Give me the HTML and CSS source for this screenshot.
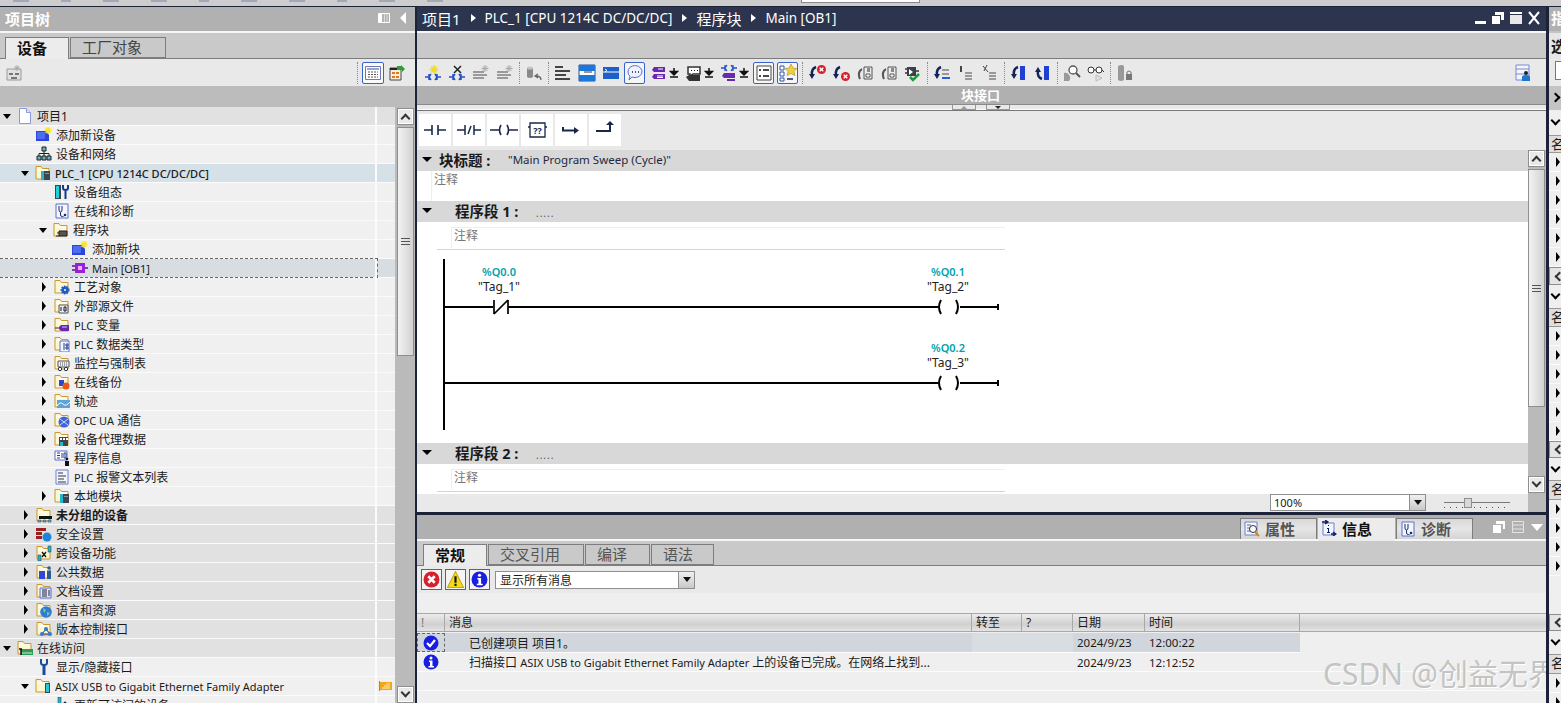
FILE: index.html
```html
<!DOCTYPE html>
<html lang="zh-CN">
<head>
    <meta charset="UTF-8">
    <title>PLC_1 Main [OB1]</title>
    <link rel="stylesheet" href="styles.css">
</head>
<body>
<!-- shared icon parts -->
<svg class="defs" xmlns="http://www.w3.org/2000/svg">
    <symbol id="folder" viewBox="0 0 16 16"><path d="M1 14V1.500h5l1.500 2H14V14z" fill="#fdf6d2" stroke="#c9982e"/><path d="M2 5h11" stroke="#fff"/></symbol>
    <symbol id="addnew" viewBox="0 0 16 16"><path d="M0 4h10v-1l3 5v6H0z" fill="#2d46d8"/><path d="M1 5h8v7H1z" fill="#4f6cf0"/><path d="M12 0v7M8.500 3.500h7M9.500 1l5 5M14.500 1l-5 5" stroke="#f7e42a" stroke-width="1.300"/></symbol>
    <symbol id="module" viewBox="0 0 16 16"><path d="M6 6h9v9H6z" fill="#3c4650"/><path d="M6 6h3v9H6z" fill="#28b4c8"/><path d="M10 8h4v1h-4z" fill="#8a949c"/></symbol>
    <symbol id="diag" viewBox="0 0 16 16"><path d="M2 1h12v14H2z" fill="#f4f6ff" stroke="#5a6ed0"/><path d="M5 3v4q0 2 1.500 2T8 7V3M6.500 9v3q0 1.500 2 1.500h1" fill="none" stroke="#1c2a60"/><circle cx="11" cy="12" r="1.300" fill="#1c2a60"/></symbol>
    <symbol id="net" viewBox="0 0 18 18"><path d="M1 13h4M5 10v6M13 10v6M13 13h4M7 10l-2 3 2 3M11 10l2 3-2 3" fill="none" stroke="#2450c8" stroke-width="1.500"/></symbol>
    <symbol id="star" viewBox="0 0 18 18"><path d="M10 1v9M5.500 5.500h9M7 2.500l6 6M13 2.500l-6 6" stroke="#f3dc20" stroke-width="1.500"/></symbol>
    <symbol id="graylines" viewBox="0 0 18 18"><path d="M1 8h11M1 11h14M1 14h11" stroke="#9a9a9a" stroke-width="2"/></symbol>
    <symbol id="grayburst" viewBox="0 0 18 18"><path d="M13 1v7M9.500 4.500h7M10.500 2l5 5M15.500 2l-5 5" stroke="#a8a8a8"/></symbol>
    <symbol id="cyl" viewBox="0 0 18 18"><path d="M2 4q3-2 6 0v9q-3 2-6 0z" fill="#8a8a8a"/><ellipse cx="5" cy="4" rx="3" ry="1.500" fill="#c4c4c4"/></symbol>
    <symbol id="down" viewBox="0 0 10 18"><path d="M5 4v4M1.500 7.500h7L5 11zM1 13h8" fill="#111" stroke="#111" stroke-width="1.500"/></symbol>
    <symbol id="arc" viewBox="0 0 18 18"><path d="M8 3Q3 5 4 11" fill="none" stroke="#14245a" stroke-width="2.500"/><path d="M1 10h6l-3 5z" fill="#14245a"/></symbol>
    <symbol id="xball" viewBox="0 0 10 10"><circle cx="5" cy="5" r="5" fill="#d8202c"/><path d="M3 3l4 4M7 3l-4 4" stroke="#fff" stroke-width="1.500"/></symbol>
    <symbol id="tinybox" viewBox="0 0 18 18"><path d="M8 3h8v12H8z" fill="#ececec" stroke="#555"/><path d="M10 10h4v3h-4z" fill="#fff" stroke="#333" stroke-width=".8"/><path d="M11 4h3v4h-3z" fill="#888"/></symbol>
    <symbol id="info" viewBox="0 0 16 16"><circle cx="8" cy="8" r="7.500" fill="#1a1ee0"/><circle cx="8" cy="4" r="1.500" fill="#fff"/><path d="M6 6.500h3.500V12H11v1.500H5.500V12H7V8H6z" fill="#fff"/></symbol>
</svg>

<div class="topstrip">
    <i class="blob w16"></i><i class="blob w10"></i><i class="blob w16"></i><i class="blob w16"></i><i class="blob w10"></i><i class="blob w16"></i><i class="blob w16"></i><i class="blob w10"></i><i class="blob w16"></i><i class="blob w16"></i>
    <span class="topbox"></span>
</div>

<div class="app">
    <!-- project tree -->
    <aside class="tree-panel">
        <div class="panel-title">
            <span>项目树</span>
            <div class="title-tools">
                <svg width="12" height="10" viewBox="0 0 12 10"><path d="M.5.500h11v9H.5z" fill="#b2b2b2" stroke="#fff"/><path d="M1 1h3v8H1z" fill="#fff"/><path d="M6.500 1v8M9 1v8" stroke="#ddd"/></svg>
                <i class="tri-left"></i>
            </div>
        </div>
        <div class="white-gap"></div>
        <div class="tab-band tree-tabs">
            <span class="tab active">设备</span>
            <span class="tab">工厂对象</span>
        </div>
        <div class="tree-tools">
            <svg class="tool-left" width="16" height="16" viewBox="0 0 16 16"><path d="M1 4h14v11H1z" fill="#e0e0e0" stroke="#9a9a9a"/><path d="M3 8h4v2H3zM9 8h4v2H9zM5 12h6v2H5z" fill="#777"/><path d="M11 0v6M8 3h6M9 1l4 4M13 1l-4 4" stroke="#aaa"/></svg>
            <span class="sep"></span>
            <span class="on-btn"><svg width="16" height="14" viewBox="0 0 16 14"><path d="M.5.500h15v13H.5z" fill="#fff" stroke="#6a7ab8"/><path d="M2 2h12v2H2z" fill="#9aa4cc"/><path d="M3 6h10M3 8.500h10M3 11h10" stroke="#555" stroke-dasharray="2 1"/></svg></span>
            <svg class="tool-next" width="16" height="16" viewBox="0 0 16 16"><path d="M1 3h11v12H1z" fill="#f4f0e0" stroke="#444"/><path d="M1 3h11v2H1z" fill="#222"/><path d="M3 7h3v2H3zM7 7h3v2H7zM3 11h3v2H3zM7 11h3v2H7z" fill="#e07820"/><path d="M8 1h4V0l4 4-3 3v-2H8z" fill="#2c9c3c"/></svg>
        </div>
        <div class="tree-head"></div>
        <div class="tree-body">
            <div class="tree-rows">
                <div class="row dark lv0"><i class="arr-d"></i><svg class="ic" viewBox="0 0 16 16"><path d="M2.500.500h7l4 4v11h-11z" fill="#fff" stroke="#8a9ae0"/><path d="M9.500.500v4h4" fill="#dfe4fa" stroke="#8a9ae0"/></svg><span>项目1</span></div>
                <div class="row lv1"><i class="arr-none"></i><svg class="ic" viewBox="0 0 16 16"><use href="#addnew"/></svg><span>添加新设备</span></div>
                <div class="row lv1"><i class="arr-none"></i><svg class="ic" viewBox="0 0 16 16"><path d="M6 1h4v4H6zM1 10h4v4H1zM6 10h4v4H6zM11 10h4v4h-4z" fill="#6ab0c0" stroke="#222"/><path d="M8 5v5M3 10V7.500h10V10" fill="none" stroke="#222"/></svg><span>设备和网络</span></div>
                <div class="row current lv1"><i class="arr-d"></i><svg class="ic" viewBox="0 0 16 16"><use href="#folder"/><use href="#module"/></svg><span class="latin heavy">PLC_1 [CPU 1214C DC/DC/DC]</span></div>
                <div class="row lv2"><i class="arr-none"></i><svg class="ic" viewBox="0 0 16 16"><path d="M1 1h6v14H1z" fill="#3c4650"/><path d="M2 2h3v12H2z" fill="#20d0d8"/><path d="M9 1v3q0 2 2.500 2T14 4V1M11.500 6v9" fill="none" stroke="#123c8c" stroke-width="2"/></svg><span>设备组态</span></div>
                <div class="row lv2"><i class="arr-none"></i><svg class="ic" viewBox="0 0 16 16"><use href="#diag"/></svg><span>在线和诊断</span></div>
                <div class="row lv2"><i class="arr-d"></i><svg class="ic" viewBox="0 0 16 16"><use href="#folder"/><path d="M4 11h2M6 9h8v5H6zM3 14h3" fill="#555" stroke="#222"/></svg><span>程序块</span></div>
                <div class="row lv3"><i class="arr-none"></i><svg class="ic" viewBox="0 0 16 16"><use href="#addnew"/></svg><span>添加新块</span></div>
                <div class="row selected lv3"><i class="arr-none"></i><svg class="ic" viewBox="0 0 16 16"><path d="M0 6h3M0 10h3M13 8h3" stroke="#5a1090" stroke-width="1.500"/><path d="M3 3h10v10H3z" fill="#9a20d8"/><path d="M6 6h4v4H6z" fill="#e8b0ff"/></svg><span class="latin">Main [OB1]</span></div>
                <div class="row lv2"><i class="arr-r"></i><svg class="ic" viewBox="0 0 16 16"><use href="#folder"/><circle cx="11" cy="11" r="3.500" fill="#1e5ac8" stroke="#1e5ac8" stroke-dasharray="1.500 1" stroke-width="2"/><circle cx="11" cy="11" r="1" fill="#fff"/></svg><span>工艺对象</span></div>
                <div class="row lv2"><i class="arr-r"></i><svg class="ic" viewBox="0 0 16 16"><use href="#folder"/><path d="M5 7h9v8H5z" fill="#eef0f8" stroke="#555"/><path d="M7 9v4M10 9h2v4h-2z" fill="none" stroke="#112"/></svg><span>外部源文件</span></div>
                <div class="row lv2"><i class="arr-r"></i><svg class="ic" viewBox="0 0 16 16"><use href="#folder"/><path d="M4 11l3-3h8v6H7z" fill="#6a28b0"/><path d="M1 11h3" stroke="#222"/><path d="M8 10h5" stroke="#d8c0f0"/></svg><span><b class="latin">PLC</b> 变量</span></div>
                <div class="row lv2"><i class="arr-r"></i><svg class="ic" viewBox="0 0 16 16"><use href="#folder"/><path d="M6 5h9v11H6z" fill="#f4f6ff" stroke="#5a6ed0"/><path d="M10 7v7M12 8h2v2h-2zM12 11h2v2h-2z" fill="none" stroke="#233a8c"/></svg><span><b class="latin">PLC</b> 数据类型</span></div>
                <div class="row lv2"><i class="arr-r"></i><svg class="ic" viewBox="0 0 16 16"><use href="#folder"/><path d="M4 6h11v6H4z" fill="#eef0f8" stroke="#555"/><path d="M6 8h7M6 10h7" stroke="#555" stroke-dasharray="1 1"/><circle cx="6" cy="14" r="1.700" fill="#fff" stroke="#234"/><circle cx="12" cy="14" r="1.700" fill="#fff" stroke="#234"/></svg><span>监控与强制表</span></div>
                <div class="row lv2"><i class="arr-r"></i><svg class="ic" viewBox="0 0 16 16"><use href="#folder"/><path d="M5 6h5v6H5z" fill="#2a48d8"/><circle cx="12" cy="12" r="3.500" fill="#e85818"/></svg><span>在线备份</span></div>
                <div class="row lv2"><i class="arr-r"></i><svg class="ic" viewBox="0 0 16 16"><use href="#folder"/><path d="M3 7h13v8H3z" fill="#5ea4d8"/><path d="M3 13q3-5 6-2t7-2" fill="none" stroke="#fff"/></svg><span>轨迹</span></div>
                <div class="row lv2"><i class="arr-r"></i><svg class="ic" viewBox="0 0 16 16"><use href="#folder"/><circle cx="10" cy="10" r="5.500" fill="#3d64d8"/><path d="M6 7l8 6M6 13l8-6" stroke="#cdd8fa"/></svg><span><b class="latin">OPC UA</b> 通信</span></div>
                <div class="row lv2"><i class="arr-r"></i><svg class="ic" viewBox="0 0 16 16"><use href="#folder"/><path d="M5 6h9v9H5z" fill="#3c4650"/><path d="M6 7h2v2H6zM9 7h2v2H9zM12 7h2v2h-2z" fill="#fff"/><path d="M6 11h3v4H6z" fill="#28b4c8"/></svg><span>设备代理数据</span></div>
                <div class="row lv2"><i class="arr-none"></i><svg class="ic" viewBox="0 0 16 16"><path d="M1 1h12v9H1z" fill="#fff" stroke="#5a6ed0"/><path d="M3 3h3M3 5.500h3M3 8h3M8 3v5M10 3h2v5h-2z" fill="none" stroke="#233a8c"/><path d="M11 11h4v5h-4z" fill="#111"/><circle cx="13" cy="9" r="1.300" fill="#111"/></svg><span>程序信息</span></div>
                <div class="row lv2"><i class="arr-none"></i><svg class="ic" viewBox="0 0 16 16"><path d="M2 1h12v14H2z" fill="#f4f6ff" stroke="#6a7ed8"/><path d="M4 4h5M4 7h8M4 10h6M4 13h8" stroke="#333"/></svg><span><b class="latin">PLC</b> 报警文本列表</span></div>
                <div class="row lv2"><i class="arr-r"></i><svg class="ic" viewBox="0 0 16 16"><use href="#folder"/><use href="#module"/></svg><span>本地模块</span></div>
                <div class="row dark lv1"><i class="arr-r"></i><svg class="ic" viewBox="0 0 16 16"><use href="#folder"/><path d="M3 9h13v3H3z" fill="#111"/><path d="M2 13h3v2H2zM7 13h3v2H7zM12 13h3v2h-3z" fill="#5ac0d0" stroke="#234" stroke-width=".5"/></svg><span class="strong">未分组的设备</span></div>
                <div class="row dark lv1"><i class="arr-r"></i><svg class="ic" viewBox="0 0 16 16"><path d="M0 2h10v3H0zM0 6h6v3H0zM0 10h6v3H0z" fill="#9c2020"/><circle cx="11" cy="11" r="4.500" fill="#1e84d8"/></svg><span>安全设置</span></div>
                <div class="row dark lv1"><i class="arr-r"></i><svg class="ic" viewBox="0 0 16 16"><use href="#folder"/><path d="M12 1h3v6h-3zM2 10h3v6H2z" fill="#28b4c8" stroke="#234" stroke-width=".5"/><path d="M6 7l4 5M10 7l-4 5" stroke="#111" stroke-width="1.300"/></svg><span>跨设备功能</span></div>
                <div class="row dark lv1"><i class="arr-r"></i><svg class="ic" viewBox="0 0 16 16"><use href="#folder"/><path d="M3 7h6v8H3z" fill="#3048d8"/><circle cx="13" cy="4" r="1.800" fill="#2c5c94"/><path d="M11 6.500h4V15h-4z" fill="#2c5c94"/></svg><span>公共数据</span></div>
                <div class="row dark lv1"><i class="arr-r"></i><svg class="ic" viewBox="0 0 16 16"><use href="#folder"/><path d="M4 5h11v10H4z" fill="#e4e8fa" stroke="#5a6ed0"/><path d="M6 7h5M6 9h5M6 11h5M6 13h5M13 7v6" stroke="#223"/></svg><span>文档设置</span></div>
                <div class="row dark lv1"><i class="arr-r"></i><svg class="ic" viewBox="0 0 16 16"><use href="#folder"/><circle cx="10" cy="10" r="5.800" fill="#2c7cd8"/><path d="M7 6l3 2-2 3zM11 10l3 1-3 3z" fill="#80d070"/></svg><span>语言和资源</span></div>
                <div class="row dark lv1"><i class="arr-r"></i><svg class="ic" viewBox="0 0 16 16"><use href="#folder"/><path d="M10 8l-4 5h8z" fill="none" stroke="#234"/><circle cx="10" cy="8" r="2" fill="#2c7cd8"/><circle cx="6" cy="13" r="2" fill="#2c7cd8"/><circle cx="14" cy="13" r="2" fill="#2c7cd8"/></svg><span>版本控制接口</span></div>
                <div class="row dark lv0"><i class="arr-d"></i><svg class="ic" viewBox="0 0 16 16"><use href="#folder"/><path d="M4 9h12v6H4z" fill="#2f9a58"/><path d="M4 9v6M2 9h3" stroke="#111" stroke-width="1.500"/><path d="M6 14v-2M8 14v-2M10 14v-2M12 14v-2M14 14v-2" stroke="#cfe8d0"/></svg><span>在线访问</span></div>
                <div class="row lv1"><i class="arr-none"></i><svg class="ic" viewBox="0 0 16 16"><path d="M5 0v4q0 2 3 2t3-2V0" fill="none" stroke="#1c4c98" stroke-width="2"/><path d="M8 6v10" stroke="#1c4c98" stroke-width="3"/></svg><span>显示/隐藏接口</span></div>
                <div class="row lv1"><i class="arr-d"></i><svg class="ic" viewBox="0 0 16 16"><use href="#folder"/><path d="M10 5h5v10h-5z" fill="#3c4650"/><path d="M11 6h3v8h-3z" fill="#28c8d8"/></svg><span class="latin">ASIX USB to Gigabit Ethernet Family Adapter</span>
                    <svg class="flag" width="14" height="10" viewBox="0 0 14 10"><path d="M1 1h12v8H1z" fill="#f0a818"/><path d="M0 0v10" stroke="#222"/><path d="M3 7h8M5 5h6M7 3h4" stroke="#fff2c0"/></svg></div>
                <div class="row lv2"><i class="arr-none"></i><svg class="ic" viewBox="0 0 16 16"><path d="M4 0h3v8H4z" fill="#28b4c8" stroke="#234" stroke-width=".5"/><circle cx="11" cy="6" r="1.500" fill="#223"/></svg><span>更新可访问的设备</span></div>
            </div>
            <div class="vscroll tree-scroll">
                <span class="sb-btn"><i class="chev-up"></i></span>
                <span class="sb-thumb"><i class="grip"></i></span>
                <span class="sb-fill"></span>
                <span class="sb-btn"><i class="chev-down"></i></span>
            </div>
        </div>
    </aside>

    <main class="main">
        <div class="editor-title">
            <span class="crumb cjk">项目1</span><i class="crumb-arr"></i>
            <span class="crumb">PLC_1 [CPU 1214C DC/DC/DC]</span><i class="crumb-arr"></i>
            <span class="crumb cjk">程序块</span><i class="crumb-arr"></i>
            <span class="crumb">Main [OB1]</span>
            <div class="win-btns">
                <svg width="11" height="14" viewBox="0 0 11 14"><path d="M0 10h11v3H0z" fill="#fff"/></svg>
                <svg width="12" height="14" viewBox="0 0 12 14"><path d="M3 1h9v8H9V4H3zM0 5h8v8H0z" fill="#fff"/></svg>
                <svg width="12" height="14" viewBox="0 0 12 14"><path d="M0 1h12v2H0z" fill="#fff"/><path d="M0 4h12v9H0z" fill="#e8e8e8"/></svg>
                <svg width="12" height="14" viewBox="0 0 12 14"><path d="M1 1l10 12M11 1L1 13" stroke="#fff" stroke-width="2"/></svg>
            </div>
        </div>
        <div class="white-gap"></div>
        <div class="tab-band"></div>

        <div class="toolbar">
            <span class="tb"><svg viewBox="0 0 18 18"><use href="#net"/><use href="#star"/></svg></span>
            <span class="tb"><svg viewBox="0 0 18 18"><use href="#net"/><path d="M6 2l7 7M13 2L6 9" stroke="#222" stroke-width="1.500"/></svg></span>
            <span class="tb"><svg viewBox="0 0 18 18"><use href="#graylines"/><use href="#grayburst"/></svg></span>
            <span class="tb"><svg viewBox="0 0 18 18"><use href="#graylines"/><use href="#grayburst"/></svg></span>
            <span class="tb-sep"></span>
            <span class="tb"><svg viewBox="0 0 18 18"><use href="#cyl"/><path d="M16 16q0-4-5-4m2-2l-3 2 3 2" fill="none" stroke="#666" stroke-width="1.300"/></svg></span>
            <span class="tb-sep"></span>
            <span class="tb"><svg viewBox="0 0 18 18"><path d="M1 3h8M1 7h15M1 11h11M1 15h15" stroke="#444" stroke-width="2"/></svg></span>
            <span class="tb"><svg viewBox="0 0 18 18"><path d="M1 1h16v16H1z" fill="#fff" stroke="#2050a0"/><path d="M1 1h16v6H1zM1 11h16v6H1z" fill="#1c78d8"/><path d="M6 8h8" stroke="#333"/></svg></span>
            <span class="tb"><svg viewBox="0 0 18 18"><path d="M1 3h16v12H1z" fill="#1c60c8"/><path d="M1 8h16" stroke="#fff"/><path d="M3 5l2 1.500L3 8" fill="none" stroke="#fff"/></svg></span>
            <span class="tb on"><svg viewBox="0 0 18 18"><path d="M2 8a7 6 0 1 1 4 5l-3 3 1-4q-2-1-2-4z" fill="#eef2ff" stroke="#5a70c8"/><path d="M6 8h1M9 8h1M12 8h1" stroke="#223" stroke-width="1.500"/></svg></span>
            <span class="tb wide"><svg viewBox="0 0 18 18"><path d="M2 6l2-3h11v5H4zM2 13l2-3h11v5H4z" fill="#6a28b0"/><path d="M8 5h5M7 12h6M7 13.500h6" stroke="#fff"/></svg><svg class="dn" viewBox="0 0 10 18"><use href="#down"/></svg></span>
            <span class="tb wide"><svg viewBox="0 0 18 18"><path d="M3 3h12v7H8l-3 2v-2H3z" fill="#fff" stroke="#333" stroke-width="1.500"/><path d="M6 6.500h1M9 6.500h1M12 6.500h1" stroke="#111"/><path d="M1 13l3-2h11v6H4z" fill="#333"/></svg><svg class="dn" viewBox="0 0 10 18"><use href="#down"/></svg></span>
            <span class="tb wide"><svg viewBox="0 0 18 18"><path d="M1 4h4M5 1v6M13 1v6M13 4h4M7 1L5 4l2 3M11 1l2 3-2 3" fill="none" stroke="#2450c8" stroke-width="1.300"/><path d="M2 12l2-3h11v5H4z" fill="#6a28b0"/><path d="M7 16h8" stroke="#6a28b0" stroke-width="2"/></svg><svg class="dn" viewBox="0 0 10 18"><use href="#down"/></svg></span>
            <span class="tb on"><svg viewBox="0 0 18 18"><path d="M2 2h14v14H2z" fill="#fff" stroke="#444"/><path d="M4 6h2M8 6h6M4 12h2M8 12h6" stroke="#111" stroke-width="1.500"/></svg></span>
            <span class="tb on"><svg viewBox="0 0 18 18"><path d="M1 2h4v4H1zM1 8h4v4H1zM1 14h4v3H1z" fill="#fff" stroke="#3050b0"/><path d="M12 0l2 4 4 .500-3 3 1 4-4-2-4 2 1-4-3-3 4-.500z" fill="#f0d040" stroke="#a88820" stroke-width=".6"/><path d="M8 15h6" stroke="#14245a" stroke-width="1.500"/></svg></span>
            <span class="tb-sep"></span>
            <span class="tb"><svg viewBox="0 0 18 18"><use href="#arc"/><use href="#xball" x="9" y="1" width="9" height="9"/></svg></span>
            <span class="tb"><svg viewBox="0 0 18 18"><use href="#arc"/><use href="#xball" x="9" y="8" width="9" height="9"/></svg></span>
            <span class="tb"><svg viewBox="0 0 18 18"><use href="#tinybox"/><path d="M6 5Q1 8 4 15" fill="none" stroke="#555" stroke-width="2"/></svg></span>
            <span class="tb"><svg viewBox="0 0 18 18"><use href="#tinybox"/><path d="M6 5Q1 8 4 15" fill="none" stroke="#555" stroke-width="2"/></svg></span>
            <span class="tb"><svg viewBox="0 0 18 18"><path d="M3 3h9v9H3z" fill="#3a4048"/><path d="M5 5l4 3-4 3z" fill="#fff"/><path d="M1 5h2M1 9h2M12 7h3" stroke="#333" stroke-width="1.500"/><path d="M6 13l3 3 6-6" fill="none" stroke="#1c9c3c" stroke-width="2.500"/></svg></span>
            <span class="tb-sep"></span>
            <span class="tb"><svg viewBox="0 0 18 18"><use href="#arc"/><path d="M9 6h7M9 10h7" stroke="#999" stroke-width="2"/><path d="M9 14h8" stroke="#2c5cd8" stroke-width="2"/></svg></span>
            <span class="tb"><svg viewBox="0 0 18 18"><path d="M4 2v6" stroke="#444" stroke-width="2"/><path d="M8 9h7M8 12h7M8 15h7" stroke="#999" stroke-width="2"/></svg></span>
            <span class="tb"><svg viewBox="0 0 18 18"><path d="M2 2l5 6M6 1L3 7" stroke="#444"/><path d="M8 9h7M8 12h7M8 15h7" stroke="#999" stroke-width="2"/></svg></span>
            <span class="tb-sep"></span>
            <span class="tb"><svg viewBox="0 0 18 18"><use href="#arc"/><path d="M10 2h5v14h-5z" fill="#2040d0"/></svg></span>
            <span class="tb"><svg viewBox="0 0 18 18"><g transform="matrix(1 0 0 -1 0 18)"><use href="#arc"/></g><path d="M10 2h5v14h-5z" fill="#2040d0"/></svg></span>
            <span class="tb-sep"></span>
            <span class="tb"><svg viewBox="0 0 18 18"><path d="M1 9a5 5 0 0 1 5 8H1z" fill="#999"/><circle cx="10" cy="6" r="4" fill="#fff" stroke="#555" stroke-width="1.300"/><path d="M13 9l4 4" stroke="#555" stroke-width="2"/></svg></span>
            <span class="tb"><svg viewBox="0 0 18 18"><circle cx="4" cy="6" r="3" fill="#fff" stroke="#333"/><circle cx="12" cy="6" r="3" fill="#fff" stroke="#333"/><path d="M7 6h2M15 6l2 2" stroke="#333"/><path d="M9 11l6 3-6 3z" fill="#e4e4e4" stroke="#bbb"/></svg></span>
            <span class="tb-sep"></span>
            <span class="tb"><svg viewBox="0 0 18 18"><path d="M2 2q4-2 6 0v14q-3 2-6 0z" fill="#999"/><path d="M10 10h6v6h-6z" fill="#777"/><path d="M11 10V8q2-2 4 0v2" fill="none" stroke="#777"/></svg></span>
            <svg class="tb-user" viewBox="0 0 16 18"><path d="M1 1h13v15H1z" fill="#f4f6ff" stroke="#7a88d0"/><path d="M1 5h13M1 10h13" stroke="#7a88d0"/><circle cx="11" cy="9" r="2" fill="#223"/><path d="M7 17v-4q0-2 4-2t4 2v4z" fill="#1c78c8"/></svg>
        </div>

        <div class="iface-bar">块接口</div>
        <div class="grips">
            <span class="grip-a"><i class="up"></i></span>
            <span class="grip-b"><i class="dn"></i></span>
        </div>

        <div class="instr">
            <span class="instr-btn"><svg viewBox="0 0 32 32"><path d="M5 16h8M13 11v10M19 11v10M19 16h8" fill="none" stroke="#18284a" stroke-width="1.600"/></svg></span>
            <span class="instr-btn"><svg viewBox="0 0 32 32"><path d="M4 16h8M12 11v10M21 11v10M21 16h7M15 20l3-8" fill="none" stroke="#18284a" stroke-width="1.500"/></svg></span>
            <span class="instr-btn"><svg viewBox="0 0 32 32"><path d="M3 16h9M22 16h9M14 11q-3 5 0 10M20 11q3 5 0 10" fill="none" stroke="#18284a" stroke-width="1.600"/></svg></span>
            <span class="instr-btn"><svg viewBox="0 0 32 32"><path d="M9 9h15v14H9zM7 13h2M24 13h2" fill="none" stroke="#18284a" stroke-width="1.300"/><text x="16.500" y="20" text-anchor="middle" class="qq">??</text></svg></span>
            <span class="instr-btn"><svg viewBox="0 0 32 32"><path d="M8 13v3.500h11" fill="none" stroke="#18284a" stroke-width="2"/><path d="M19 13l5 3.500-5 3.500z" fill="#18284a"/></svg></span>
            <span class="instr-btn"><svg viewBox="0 0 32 32"><path d="M7 17h14v-6" fill="none" stroke="#18284a" stroke-width="2"/><path d="M17 11l4-4 4 4z" fill="#18284a"/></svg></span>
        </div>

        <div class="editor">
            <div class="code">
                <div class="blocks">
                    <div class="net-head"><i class="arr-d"></i><b class="block-lbl">块标题 :</b><span class="block-val">"Main Program Sweep (Cycle)"</span></div>
                    <div class="block-comment"><span>注释</span></div>

                    <div class="net-head"><i class="arr-d"></i><b class="net-lbl">程序段 1 :</b><span class="dots">.....</span></div>
                    <div class="net-comment"><span>注释</span></div>
                    <svg class="ladder" width="600" height="193" viewBox="0 0 600 193">
                        <path d="M27 9v171" stroke="#000" stroke-width="2"/>
                        <path d="M27 57h49M91 57h430M543 57h38M27 133h494M543 133h38" stroke="#000" stroke-width="2"/>
                        <path d="M77 50v14M91 50v14M77 64l14-14" fill="none" stroke="#000" stroke-width="1.700"/>
                        <path d="M524 50q-4 7 0 14M539 50q4 7 0 14M524 126q-4 7 0 14M539 126q4 7 0 14" fill="none" stroke="#000" stroke-width="2"/>
                        <path d="M581 54v6M581 130v6" stroke="#000" stroke-width="2"/>
                        <text class="addr" x="82" y="26" text-anchor="middle">%Q0.0</text>
                        <text class="tag" x="82" y="41" text-anchor="middle">"Tag_1"</text>
                        <text class="addr" x="531" y="26" text-anchor="middle">%Q0.1</text>
                        <text class="tag" x="531" y="41" text-anchor="middle">"Tag_2"</text>
                        <text class="addr" x="531" y="102" text-anchor="middle">%Q0.2</text>
                        <text class="tag" x="531" y="117" text-anchor="middle">"Tag_3"</text>
                    </svg>

                    <div class="net-head"><i class="arr-d"></i><b class="net-lbl">程序段 2 :</b><span class="dots">.....</span></div>
                    <div class="net-comment"><span>注释</span></div>
                </div>
                <div class="code-foot">
                    <div class="zoom-box"><span>100%</span><i class="combo-btn"><i class="tri-down"></i></i></div>
                    <div class="zoom-slider"><i class="knob"></i></div>
                </div>
            </div>
            <div class="vscroll code-scroll">
                <span class="sb-btn"><i class="chev-up"></i></span>
                <span class="sb-thumb"><i class="grip"></i></span>
                <span class="sb-fill"></span>
                <span class="sb-btn"><i class="chev-down"></i></span>
                <span class="sb-end"></span>
            </div>
        </div>

        <div class="inspector">
            <div class="insp-tabs">
                <span class="insp-tab"><svg viewBox="0 0 16 16"><path d="M1 1h12v13H1z" fill="#f4f6ff" stroke="#6a7ed8"/><path d="M3 4h4M3 7h3M3 10h3" stroke="#667"/><circle cx="9" cy="8" r="3.500" fill="#fff" stroke="#333"/><path d="M11 11l4 4" stroke="#c88820" stroke-width="2"/></svg>属性</span>
                <span class="insp-tab active"><svg viewBox="0 0 16 16"><path d="M2 3h11v12H2z" fill="#f4f6ff" stroke="#6a7ed8"/><path d="M1 2h5M4 0l3 2-3 2M10 14h5M12 12l3 2-3 2" fill="none" stroke="#101c60" stroke-width="1.300"/><path d="M7 5h1v1H7zM6 8h2v4h1v1H6v-1h1V9H6z" fill="#101c60"/></svg>信息</span>
                <span class="insp-tab"><svg viewBox="0 0 16 16"><use href="#diag"/></svg>诊断</span>
                <div class="insp-tools">
                    <svg width="12" height="12" viewBox="0 0 12 12"><path d="M3 0h9v8h-2V3H3zM0 4h8v8H0z" fill="#fff"/></svg>
                    <svg width="12" height="12" viewBox="0 0 12 12"><path d="M.5.500h11v11H.5zM1 4h10M1 8h10" fill="none" stroke="#e4e4e4"/></svg>
                    <i class="tri-white"></i>
                </div>
            </div>
            <div class="white-gap"></div>
            <div class="tab-band msg-tabs">
                <span class="tab active">常规</span>
                <span class="tab">交叉引用</span>
                <span class="tab">编译</span>
                <span class="tab">语法</span>
            </div>
            <div class="filters">
                <span class="flt"><svg viewBox="0 0 16 16"><circle cx="8" cy="8" r="7.500" fill="#d8202c"/><path d="M5 5l6 6M11 5l-6 6" stroke="#fff" stroke-width="2.500"/></svg></span>
                <span class="flt"><svg viewBox="0 0 16 16"><path d="M8 .500l7.500 15H.5z" fill="#f4dc14" stroke="#c8a810"/><path d="M7 5h2v6H7zM7 12h2v2H7z" fill="#111"/></svg></span>
                <span class="flt"><svg viewBox="0 0 16 16"><use href="#info"/></svg></span>
                <div class="combo"><span>显示所有消息</span><i class="combo-btn"><i class="tri-down"></i></i></div>
            </div>
            <div class="msg-space"></div>
            <div class="msg-head">
                <span class="col c-flag pale-text">!</span>
                <span class="col c-msg">消息</span>
                <span class="col c-goto">转至</span>
                <span class="col c-q">?</span>
                <span class="col c-date">日期</span>
                <span class="col c-time">时间</span>
                <span class="col c-rest"></span>
            </div>
            <div class="msg-row first">
                <span class="cell c-flag focus"><svg viewBox="0 0 16 16"><circle cx="8" cy="8" r="7.500" fill="#1a1ee0"/><path d="M4 8l3 3 5-6" fill="none" stroke="#fff" stroke-width="2.200"/></svg></span>
                <span class="cell c-msg text">已创建项目 项目1。</span>
                <span class="cell c-goto pale"></span>
                <span class="cell c-q pale"></span>
                <span class="cell c-date">2024/9/23</span>
                <span class="cell c-time">12:00:22</span>
            </div>
            <div class="msg-row">
                <span class="cell c-flag"><svg viewBox="0 0 16 16"><use href="#info"/></svg></span>
                <span class="cell c-msg text"><span>扫描接口 <b class="latin">ASIX USB to Gigabit Ethernet Family Adapter</b> 上的设备已完成。在网络上找到...</span></span>
                <span class="cell c-goto"></span>
                <span class="cell c-q"></span>
                <span class="cell c-date">2024/9/23</span>
                <span class="cell c-time">12:12:52</span>
            </div>
            <div class="msg-row"></div>
            <div class="watermark">CSDN @创益无界</div>
        </div>
    </main>

    <!-- task cards, cut off by the window edge -->
    <aside class="cards">
        <div class="card-title">指令</div>
        <div class="card-gap"></div>
        <div class="card-opt">选项</div>
        <div class="card-input"><i></i></div>
        <div class="card-grey"><i class="chev-right"></i></div>
        <div class="card-gap"></div>
        <div class="card-chev h25"><i class="chev-down"></i></div>
        <div class="card-name h18">名称</div>
        <div class="card-row"><i class="arr-r"></i></div><div class="card-row"><i class="arr-r"></i></div><div class="card-row"><i class="arr-r"></i></div><div class="card-row"><i class="arr-r"></i></div><div class="card-row"><i class="arr-r"></i></div><div class="card-row"><i class="arr-r"></i></div>
        <div class="card-back h18"><i class="chev-left"></i></div>
        <div class="card-chev h23"><i class="chev-down"></i></div>
        <div class="card-name h19">名称</div>
        <div class="card-row"><i class="arr-r"></i></div><div class="card-row"><i class="arr-r"></i></div><div class="card-row"><i class="arr-r"></i></div><div class="card-row"><i class="arr-r"></i></div><div class="card-row"><i class="arr-r"></i></div><div class="card-row"><i class="arr-r"></i></div>
        <div class="card-back h17"><i class="chev-left"></i></div>
        <div class="card-chev h22"><i class="chev-down"></i></div>
        <div class="card-name h20">名称</div>
        <div class="card-row"><i class="arr-r"></i></div><div class="card-row"><i class="arr-r"></i></div><div class="card-row"><i class="arr-r"></i></div><div class="card-row"><i class="arr-r"></i></div>
        <div class="card-blank"></div>
        <div class="card-back h17"><i class="chev-left"></i></div>
        <div class="card-chev h23"><i class="chev-down"></i></div>
        <div class="card-name h20">名称</div>
        <div class="card-row"><i class="arr-r"></i></div><div class="card-row"><i class="arr-r"></i></div>
    </aside>
</div>
</body>
</html>
```

FILE: styles.css
```css
* {
    box-sizing: border-box;
}
html, body {
    margin: 0;
    height: 703px;
    overflow: hidden;
}
body {
    font-family: "Noto Sans", "Noto Sans CJK SC", sans-serif;
    font-size: 12px;
    color: #1a1a1a;
    background-color: #efefef;
}
i {
    display: block;
    flex: none;
}
svg {
    display: block;
    flex: none;
}
.defs {
    display: none;
}

/* top strip */
.topstrip {
    height: 7px;
    display: flex;
    gap: 32px;
    padding-left: 13px;
    background-color: #cdcdcd;
    border-bottom: 1px solid #1c2338;
}
.blob {
    height: 2px;
    background-color: #a4a8ba;
}
.w16 {
    width: 16px;
}
.w10 {
    width: 10px;
}
.topbox {
    width: 119px;
    height: 3px;
    margin-left: 326px;
    background-color: #fff;
    border: 1px solid #888;
    border-top: none;
}

.app {
    display: flex;
    height: 696px;
}
.white-gap {
    height: 2px;
    background-color: #f6f6f6;
}
.tab-band {
    height: 26px;
    background-color: #c9c9c9;
    border-bottom: 1px solid #7d7d7d;
}
.tab {
    display: flex;
    align-items: center;
    padding: 0 0 1px 11px;
    font-size: 15px;
    line-height: 20px;
    color: #444;
    background-color: #c9c9c9;
    border: 1px solid #7d7d7d;
}
.tab.active {
    font-weight: bold;
    color: #111;
    background-color: #ececec;
    border-bottom: none;
}

/* left panel */
.tree-panel {
    width: 415px;
    flex: none;
    display: flex;
    flex-direction: column;
}
.panel-title {
    height: 24px;
    display: flex;
    align-items: center;
    justify-content: space-between;
    padding: 0 0 2px 5px;
    font-size: 15px;
    font-weight: bold;
    color: #fff;
    background-color: #b1b1b1;
}
.title-tools {
    display: flex;
    align-items: center;
    gap: 10px;
    padding-right: 9px;
}
.tri-left {
    border: 6px solid transparent;
    border-left: none;
    border-right: 6px solid #fff;
}
.tree-tabs {
    display: flex;
    align-items: flex-end;
    gap: 1px;
    padding-left: 5px;
}
.tree-tabs .tab {
    height: 22px;
    margin-bottom: -1px;
    width: 64px;
}
.tree-tabs .tab + .tab {
    width: 96px;
    margin-bottom: 0;
    height: 21px;
}
.tree-tools {
    height: 27px;
    display: flex;
    align-items: center;
    padding-left: 6px;
    background-color: #e9e9e9;
}
.tool-left {
    margin-right: 335px;
}
.sep {
    width: 1px;
    height: 22px;
    margin-right: 4px;
    border-left: 1px dotted #888;
}
.on-btn {
    width: 22px;
    height: 22px;
    display: flex;
    align-items: center;
    justify-content: center;
    background-color: #fafafa;
    border: 1px solid #3a62c8;
    border-radius: 2px;
}
.tool-next {
    margin-left: 5px;
}
.tree-head {
    height: 21px;
    background-color: #bcbcbc;
}
.tree-body {
    display: flex;
    flex: 1;
    overflow: hidden;
}
.tree-rows {
    width: 395px;
    flex: none;
}
.row {
    position: relative;
    height: 19px;
    display: flex;
    align-items: center;
    white-space: nowrap;
    background-color: #f0f0f0;
    border-bottom: 1px solid #fbfbfb;
}
.row::after {
    content: "";
    position: absolute;
    left: 375px;
    top: 0;
    bottom: -1px;
    width: 2px;
    background-color: #fbfbfb;
}
.row.dark {
    background-color: #e1e1e1;
}
.row.current {
    background-color: #d5e1e7;
}
.row.selected {
    background-color: #d8dde1;
}
.row.selected::before {
    content: "";
    position: absolute;
    left: 0;
    top: -1px;
    bottom: -1px;
    width: 377px;
    border-top: 1px dashed #666;
    border-bottom: 1px dashed #666;
    border-right: 1px dashed #666;
}
.lv1 {
    padding-left: 18px;
}
.lv2 {
    padding-left: 36px;
}
.lv3 {
    padding-left: 54px;
}
.arr-none {
    width: 18px;
}
.arr-r, .arr-d {
    width: 0;
    height: 0;
    border-style: solid;
    border-color: transparent;
}
.arr-r {
    margin: 0 9px 0 5px;
    border-width: 5px 0 5px 4px;
    border-left-color: #000;
}
.arr-d {
    margin: 0 6px 0 3px;
    border-width: 5px 4.500px 0;
    border-top-color: #000;
}
.row .arr-r {
    margin-left: 6px;
    margin-right: 8px;
}
.ic {
    width: 16px;
    height: 16px;
    margin-right: 4px;
}
.row span {
    font-size: 12px;
}
.row span.latin, b.latin {
    font-weight: 400;
    font-size: 11px;
}
.row span.latin.heavy {
    font-weight: 500;
}
.strong {
    font-weight: bold;
}
.flag {
    position: absolute;
    left: 379px;
    top: 4px;
    z-index: 1;
}

/* scroll bars */
.vscroll {
    width: 20px;
    flex: none;
    display: flex;
    flex-direction: column;
    align-items: center;
    padding-top: 1px;
    background-color: #bababa;
}
.sb-btn {
    width: 17px;
    height: 17px;
    flex: none;
    display: flex;
    align-items: center;
    justify-content: center;
    background-color: #e9e9e9;
    border: 1px solid #8e8e8e;
    box-shadow: inset 0 0 0 1px #fff;
}
.sb-thumb {
    width: 17px;
    flex: none;
    display: flex;
    align-items: center;
    justify-content: center;
    margin-top: 2px;
    background: linear-gradient(to right, #f2f2f2, #d2d2d2);
    border: 1px solid #8e8e8e;
}
.tree-scroll .sb-thumb {
    height: 229px;
}
.sb-fill {
    flex: 1;
}
.grip {
    width: 9px;
    height: 7px;
    border-top: 1px solid #555;
    border-bottom: 1px solid #555;
    background: linear-gradient(#555, #555) center / 100% 1px no-repeat;
}
.chev-up, .chev-down, .chev-left, .chev-right {
    width: 7px;
    height: 7px;
    border: solid #333;
    border-width: 2px 0 0 2px;
}
.chev-up {
    transform: translateY(2px) rotate(45deg);
}
.chev-down {
    transform: translateY(-2px) rotate(225deg);
}
.chev-left {
    transform: translateX(2px) rotate(-45deg);
}
.chev-right {
    transform: rotate(135deg);
}

/* editor */
.main {
    width: 1131px;
    flex: none;
    display: flex;
    flex-direction: column;
    border-left: 2px solid #1c2338;
}
.editor-title {
    height: 24px;
    display: flex;
    align-items: center;
    padding: 0 0 2px 5px;
    color: #fff;
    background-color: #2c344e;
}
.crumb {
    font-size: 13.500px;
    white-space: nowrap;
}
.crumb.cjk {
    font-size: 15px;
}
.crumb-arr {
    margin: 0 9px 0 10px;
    border-style: solid;
    border-color: transparent;
    border-width: 4px 0 4px 5px;
    border-left-color: #fff;
}
.win-btns {
    display: flex;
    gap: 6px;
    margin-left: auto;
    padding-right: 6px;
}
.toolbar {
    height: 27px;
    display: flex;
    align-items: center;
    padding-left: 4px;
    background-color: #e9e9e9;
}
.tb {
    width: 24px;
    height: 22px;
    flex: none;
    display: flex;
    align-items: center;
    justify-content: center;
}
.tb svg {
    width: 18px;
    height: 18px;
}
.tb.wide {
    width: 35px;
    gap: 1px;
}
.tb.wide .dn {
    width: 10px;
}
.tb.on {
    width: 21px;
    margin: 0 2px 0 1px;
    background-color: #f6f6f6;
    border: 1px solid #3a62c8;
    border-radius: 2px;
}
.tb-sep {
    width: 1px;
    height: 22px;
    margin: 0 2px;
    border-left: 1px dotted #888;
}
.tb-user {
    width: 16px;
    height: 18px;
    margin-left: auto;
    margin-right: 15px;
}
.iface-bar {
    height: 19px;
    line-height: 19px;
    padding-left: 544px;
    font-size: 13px;
    font-weight: bold;
    color: #fff;
    background-color: #b0b0b0;
    border-bottom: 1px solid #8a8a8a;
}
.grips {
    height: 6px;
    position: relative;
    background-color: #e9e9e9;
    border-bottom: 1px solid #777;
    box-shadow: inset 0 -1px 0 #fff;
}
.grip-a, .grip-b {
    position: absolute;
    top: 0;
    width: 24px;
    height: 5px;
    display: flex;
    justify-content: center;
    align-items: center;
    border: 1px solid #999;
    border-top: none;
}
.grip-a {
    left: 535px;
}
.grip-b {
    left: 569px;
}
.grips .up {
    border: 3px solid transparent;
    border-top: none;
    border-bottom: 3px solid #999;
}
.grips .dn {
    border: 3px solid transparent;
    border-bottom: none;
    border-top: 3px solid #222;
}
.instr {
    height: 39px;
    display: flex;
    gap: 2px;
    padding: 3px 0 0 2px;
    background-color: #e9e9e9;
}
.instr-btn {
    width: 32px;
    height: 32px;
    background-color: #fff;
}
.qq {
    font-size: 9px;
    font-weight: bold;
    fill: #18284a;
}
.editor {
    height: 362px;
    display: flex;
}
.code {
    width: 1111px;
    flex: none;
    display: flex;
    flex-direction: column;
}
.blocks {
    height: 344px;
    overflow: hidden;
    background-color: #fff;
}
.net-head {
    height: 21px;
    display: flex;
    align-items: center;
    padding: 0 0 2px 5px;
    background-color: #d8d8d8;
}
.net-head .arr-d {
    margin: 0;
    border-width: 5px 5.500px 0;
}
.block-lbl {
    width: 69px;
    margin-left: 7px;
    font-size: 14.500px;
    white-space: nowrap;
}
.block-val {
    font-size: 11.500px;
    color: #1c2a40;
}
.net-lbl {
    width: 81px;
    margin-left: 23px;
    font-size: 14.500px;
    white-space: nowrap;
}
.dots {
    font-size: 10px;
    letter-spacing: 1px;
    color: #555;
    transform: translateY(2px);
}
.block-comment {
    height: 30px;
    margin-left: 14px;
    margin-right: 570px;
    padding-left: 2px;
    color: #777;
    line-height: 17px;
    border-left: 1px solid #eee;
}
.net-comment {
    height: 28px;
    margin: 0 523px 0 20px;
    padding: 5px 0 0 14px;
    color: #777;
    border-bottom: 1px solid #d2d2e0;
}
.net-comment span {
    display: block;
    height: 21px;
    padding-left: 2px;
    border: solid #eee;
    border-width: 1px 0 0 1px;
    line-height: 15px;
}
.addr {
    font-size: 11px;
    font-weight: 600;
    fill: #00a2ac;
}
.tag {
    font-size: 12px;
    fill: #222;
}
.code-foot {
    height: 18px;
    display: flex;
    align-items: flex-start;
    padding-left: 853px;
    background-color: #e9e9e9;
}
.zoom-box, .combo {
    display: flex;
    align-items: center;
    justify-content: space-between;
    background-color: #fff;
    border: 1px solid #8e8e8e;
}
.zoom-box {
    width: 156px;
    height: 17px;
    padding-left: 3px;
    font-size: 11px;
}
.combo-btn {
    width: 16px;
    height: 100%;
    display: flex;
    align-items: center;
    justify-content: center;
    background: linear-gradient(#f0f0f0, #c8c8c8);
    border-left: 1px solid #8e8e8e;
}
.tri-down {
    border: 4px solid transparent;
    border-bottom: none;
    border-top: 5px solid #111;
}
.zoom-slider {
    position: relative;
    width: 66px;
    height: 6px;
    margin: 8px 0 0 18px;
    border-top: 1px solid #777;
    background: repeating-linear-gradient(to right, #555 0 1px, transparent 1px 6px) 0 4px / 100% 2px no-repeat;
}
.knob {
    position: absolute;
    left: 20px;
    top: -5px;
    width: 8px;
    height: 10px;
    background-color: #d8d8d8;
    border: 1px solid #8e8e8e;
}
.code-scroll {
    width: 18px;
    padding-top: 0;
    align-items: flex-start;
}
.code-scroll .sb-thumb {
    height: 238px;
}
.sb-end {
    height: 19px;
    flex: none;
}

/* messages */
.inspector {
    position: relative;
    flex: 1;
    overflow: hidden;
    background-color: #efefef;
    border-top: 3px solid #1c2338;
}
.insp-tabs {
    position: relative;
    height: 24px;
    display: flex;
    align-items: flex-end;
    gap: 1px;
    padding-left: 823px;
    background-color: #b0b0b0;
}
.insp-tab {
    width: 77px;
    height: 21px;
    display: flex;
    align-items: center;
    gap: 5px;
    padding: 0 0 1px 3px;
    font-size: 15px;
    font-weight: bold;
    color: #555;
    background: linear-gradient(#d8d8d8, #e6e6e6 50%, #d4d4d4);
    border: 1px solid #7d7d7d;
    border-bottom: none;
}
.insp-tab.active {
    height: 23px;
    margin-bottom: -2px;
    padding-bottom: 3px;
    color: #111;
    z-index: 1;
    background: #ececec;
    border: none;
}
.insp-tab svg {
    width: 16px;
    height: 16px;
}
.insp-tools {
    display: flex;
    align-items: center;
    gap: 7px;
    margin-left: 19px;
    align-self: center;
}
.tri-white {
    border: 6px solid transparent;
    border-bottom: none;
    border-top: 7px solid #fff;
}
.msg-tabs {
    height: 25px;
    display: flex;
    align-items: flex-end;
    gap: 1px;
    padding-left: 6px;
}
.msg-tabs .tab {
    height: 21px;
    width: 65px;
    color: #555;
}
.msg-tabs .tab.active {
    height: 22px;
    margin-bottom: -1px;
    color: #111;
    width: 64px;
}
.msg-tabs .tab:nth-child(2) {
    width: 96px;
}
.msg-tabs .tab:nth-child(4) {
    width: 63px;
}
.filters {
    height: 27px;
    display: flex;
    align-items: center;
    gap: 3px;
    padding-left: 4px;
    background-color: #e9e9e9;
}
.flt {
    width: 21px;
    height: 21px;
    display: flex;
    align-items: center;
    justify-content: center;
    background-color: #f4f4f4;
    border: 1px solid #3a62c8;
}
.flt svg {
    width: 17px;
    height: 17px;
}
.combo {
    width: 200px;
    height: 18px;
    margin-left: 2px;
    padding-left: 4px;
}
.msg-space {
    height: 20px;
}
.msg-head {
    height: 19px;
    display: flex;
    line-height: 17px;
    background: linear-gradient(#ececec, #d0d0d0 60%, #e4e4e4);
    border-top: 1px solid #a8a8a8;
    border-bottom: 1px solid #a8a8a8;
}
.col, .cell {
    flex: none;
    white-space: nowrap;
    overflow: hidden;
}
.col {
    padding-left: 4px;
    border-right: 1px solid #a8a8a8;
}
.pale-text {
    color: #777;
}
.c-flag {
    width: 28px;
}
.c-msg {
    width: 527px;
}
.c-goto {
    width: 50px;
}
.c-q {
    width: 51px;
}
.c-date {
    width: 72px;
}
.c-time {
    width: 155px;
}
.c-rest {
    flex: 1;
    border-right: none;
}
.msg-row {
    height: 19px;
    display: flex;
    align-items: center;
    border-bottom: 1px solid #fbfbfb;
}
.msg-row.first {
    height: 20px;
    margin-top: 1px;
    width: 883px;
    background-color: #d0d6db;
}
.cell {
    height: 100%;
    display: flex;
    align-items: center;
    font-size: 11.500px;
}
.cell.c-flag {
    padding-left: 6px;
}
.cell.c-flag svg {
    width: 16px;
    height: 16px;
}
.cell.focus {
    border: 1px dashed #666;
    padding-left: 5px;
}
.cell.text {
    padding-left: 24px;
    font-size: 12px;
}
.cell.pale {
    background-color: #d7dde1;
}
.cell.c-date {
    padding-left: 4px;
}
.cell.c-time {
    padding-left: 4px;
}
.watermark {
    position: absolute;
    left: 906px;
    top: 141px;
    font-size: 30px;
    line-height: 36px;
    white-space: nowrap;
    color: #c4c4c4;
    text-shadow: 1px 1px 0 #fff;
}

/* right edge */
.cards {
    width: 15px;
    flex: none;
    overflow: hidden;
    white-space: nowrap;
    background-color: #efefef;
    border-left: 3px solid #1c2338;
}
.card-title {
    height: 24px;
    line-height: 22px;
    padding-left: 2px;
    font-size: 15px;
    font-weight: bold;
    color: #fff;
    background-color: #b1b1b1;
}
.card-gap {
    height: 2px;
    background-color: #c4c4c4;
}
.card-opt {
    height: 26px;
    line-height: 26px;
    padding-left: 2px;
    font-size: 15px;
    font-weight: bold;
    background-color: #e6e6e6;
}
.card-input {
    height: 27px;
    padding: 2px 0 0 6px;
    background-color: #e9e9e9;
}
.card-input i {
    height: 19px;
    background-color: #fff;
    border: 1px solid #777;
    border-right: none;
}
.card-grey {
    height: 22px;
    display: flex;
    align-items: center;
    padding-left: 3px;
    background-color: #c4c4c4;
}
.chev-right, .card-chev i {
    border-color: #000;
}
.card-chev {
    display: flex;
    align-items: center;
    padding-left: 3px;
    background-color: #efefef;
}
.card-name {
    font-size: 13px;
    line-height: 16px;
    padding-left: 2px;
    background-color: #dedede;
    border-top: 1px solid #999;
    border-bottom: 1px solid #999;
    overflow: hidden;
}
.card-row {
    height: 19px;
    display: flex;
    align-items: center;
    border-bottom: 1px solid #fbfbfb;
}
.card-row .arr-r {
    margin-left: 7px;
    margin-right: 0;
}
.card-back {
    display: flex;
    align-items: center;
    padding-left: 4px;
    background-color: #e4e4e4;
    border: 1px solid #8e8e8e;
    border-right: none;
}
.card-blank {
    height: 38px;
}
.h17 {
    height: 17px;
}
.h18 {
    height: 18px;
}
.h19 {
    height: 19px;
}
.h20 {
    height: 20px;
}
.h22 {
    height: 22px;
}
.h23 {
    height: 23px;
}
.h25 {
    height: 25px;
}
```
